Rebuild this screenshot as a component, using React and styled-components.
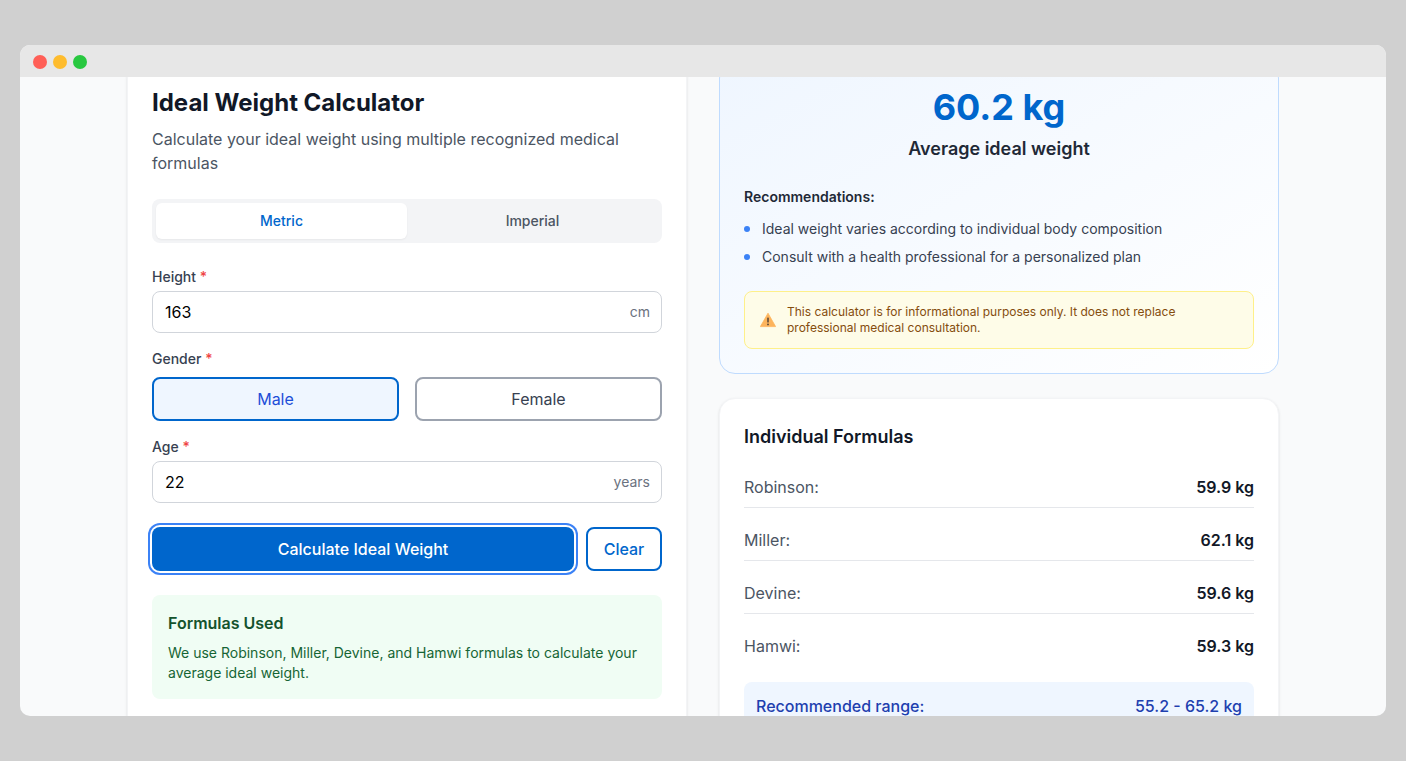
import React from "react";
import styled, { createGlobalStyle } from "styled-components";

const Global = createGlobalStyle`
  * { box-sizing: border-box; }
  html, body { margin: 0; height: 100%; }
  body {
    background: #d0d0d0;
    font-family: Inter, "Liberation Sans", sans-serif;
    overflow: hidden;
  }
`;

const Stage = styled.div`
  padding: 45px 20px;
`;
const Window = styled.div`
  height: 671px;
  border-radius: 10px;
  overflow: hidden;
  display: flex;
  flex-direction: column;
  background: #f9fafb;
`;
const TitleBar = styled.div`
  flex: none;
  height: 32px;
  background: #e7e7e7;
  display: flex;
  align-items: center;
  gap: 6px;
  padding: 2px 13px 0;
`;
const Dot = styled.span`
  width: 14px;
  height: 14px;
  border-radius: 50%;
  background: ${(p) => p.$color};
`;
const Viewport = styled.div`
  flex: 1;
  overflow: hidden;
`;
const Page = styled.div`
  width: 1152px;
  margin: -15px 0 0 107px;
  display: grid;
  grid-template-columns: 560px 560px;
  gap: 32px;
  align-items: start;
`;
const Column = styled.div`
  display: flex;
  flex-direction: column;
  gap: 24px;
`;
const Card = styled.section`
  background: #fff;
  border: 1px solid #f3f4f6;
  border-radius: 16px;
  padding: 24px;
  box-shadow: 0 1px 3px rgba(0, 0, 0, 0.1), 0 1px 2px -1px rgba(0, 0, 0, 0.1);
`;
const FormCard = styled(Card)`
  padding-bottom: 64px;
`;
const ResultCard = styled(Card)`
  background: linear-gradient(to bottom right, #eff6ff, #ffffff);
  border-color: #bfdbfe;
  box-shadow: none;
`;
const Title = styled.h1`
  margin: 0 0 8px;
  font-size: 24px;
  line-height: 32px;
  font-weight: 700;
  color: #111827;
`;
const Subtitle = styled.p`
  margin: 0 0 24px;
  font-size: 16px;
  line-height: 24px;
  color: #4b5563;
`;
const Tabs = styled.div`
  display: flex;
  padding: 4px;
  background: #f3f4f6;
  border-radius: 8px;
  margin-bottom: 24px;
`;
const Tab = styled.button`
  flex: 1;
  height: 36px;
  border: 0;
  border-radius: 6px;
  font: 500 14px/20px Inter, sans-serif;
  color: ${(p) => (p.$active ? "#0066cc" : "#4b5563")};
  background: ${(p) => (p.$active ? "#fff" : "transparent")};
  box-shadow: ${(p) => (p.$active ? "0 1px 2px rgba(0,0,0,0.05)" : "none")};
`;
const Field = styled.div`
  margin-bottom: 16px;
`;
const Label = styled.label`
  display: block;
  font-size: 14px;
  line-height: 20px;
  font-weight: 500;
  color: #374151;
  margin-bottom: ${(p) => p.$gap || 4}px;
`;
const Required = styled.span`
  color: #ef4444;
`;
const InputBox = styled.div`
  height: 42px;
  display: flex;
  align-items: center;
  padding: 0 11px 0 12px;
  border: 1px solid #d1d5db;
  border-radius: 8px;
  background: #fff;
`;
const Input = styled.input`
  flex: 1;
  min-width: 0;
  border: 0;
  outline: 0;
  padding: 0;
  background: transparent;
  font: 400 16px/24px Inter, sans-serif;
  color: #000;
`;
const Unit = styled.span`
  font-size: 14px;
  line-height: 20px;
  color: #6b7280;
`;
const GenderRow = styled.div`
  display: grid;
  grid-template-columns: 1fr 1fr;
  gap: 16px;
`;
const GenderButton = styled.button`
  height: 44px;
  border-radius: 8px;
  border: 2px solid ${(p) => (p.$active ? "#0066cc" : "#9ca3af")};
  background: ${(p) => (p.$active ? "#eff6ff" : "#fff")};
  color: ${(p) => (p.$active ? "#1d4ed8" : "#374151")};
  font: 400 16px/24px Inter, sans-serif;
`;
const Actions = styled.div`
  display: flex;
  gap: 12px;
  margin-top: 24px;
`;
const PrimaryButton = styled.button`
  flex: 1;
  height: 44px;
  border: 0;
  border-radius: 8px;
  background: #0066cc;
  color: #fff;
  font: 500 16px/24px Inter, sans-serif;
  box-shadow: 0 0 0 2px #fff, 0 0 0 4px #3b82f6;
`;
const ClearButton = styled.button`
  width: 76px;
  height: 44px;
  border: 2px solid #0066cc;
  border-radius: 8px;
  background: #fff;
  color: #0066cc;
  font: 500 16px/24px Inter, sans-serif;
`;
const InfoBox = styled.div`
  margin-top: 24px;
  padding: 16px;
  border-radius: 8px;
  background: #f0fdf4;
`;
const InfoTitle = styled.h3`
  margin: 0 0 8px;
  font-size: 16px;
  line-height: 24px;
  font-weight: 600;
  color: #14532d;
`;
const InfoText = styled.p`
  margin: 0;
  font-size: 14px;
  line-height: 20px;
  color: #166534;
`;
const BigValue = styled.div`
  text-align: center;
  font-size: 36px;
  line-height: 40px;
  font-weight: 700;
  color: #0066cc;
  margin-bottom: 8px;
`;
const BigLabel = styled.div`
  text-align: center;
  font-size: 18px;
  line-height: 28px;
  font-weight: 600;
  color: #1f2937;
  margin-bottom: 24px;
`;
const RecTitle = styled.h4`
  margin: 0 0 12px;
  font-size: 14px;
  line-height: 20px;
  font-weight: 600;
  color: #1f2937;
`;
const RecList = styled.ul`
  list-style: none;
  margin: 0 0 24px;
  padding: 0;
  display: flex;
  flex-direction: column;
  gap: 8px;
`;
const RecItem = styled.li`
  display: flex;
  align-items: center;
  gap: 12px;
  font-size: 14px;
  line-height: 20px;
  color: #374151;
`;
const Bullet = styled.span`
  flex: none;
  width: 6px;
  height: 6px;
  border-radius: 50%;
  background: #3b82f6;
`;
const Warning = styled.div`
  display: flex;
  align-items: center;
  gap: 11px;
  padding: 12px 15px;
  background: #fefce8;
  border: 1px solid #fef08a;
  border-radius: 8px;
  font-size: 12px;
  line-height: 16px;
  color: #854d0e;
`;
const WarnIcon = styled.svg`
  flex: none;
  width: 16px;
  height: 16px;
`;
const SectionTitle = styled.h3`
  margin: 0 0 16px;
  font-size: 18px;
  line-height: 28px;
  font-weight: 600;
  color: #111827;
`;
const Rows = styled.div`
  display: flex;
  flex-direction: column;
  gap: 12px;
`;
const Row = styled.div`
  display: flex;
  justify-content: space-between;
  padding: 8px 0;
  border-bottom: ${(p) => (p.$last ? "0" : "1px solid #e5e7eb")};
  font-size: 16px;
  line-height: 24px;
`;
const RowName = styled.span`
  color: #4b5563;
`;
const RowValue = styled.span`
  font-weight: 600;
  color: #111827;
`;
const RangeBox = styled.div`
  margin-top: 16px;
  padding: 12px;
  display: flex;
  justify-content: space-between;
  border-radius: 8px;
  background: #eff6ff;
  color: #1e40af;
  font-size: 16px;
  line-height: 24px;
  font-weight: 500;
`;

const formulas = [
  ["Robinson:", "59.9 kg"],
  ["Miller:", "62.1 kg"],
  ["Devine:", "59.6 kg"],
  ["Hamwi:", "59.3 kg"],
];

export default function App() {
  return (
    <>
      <Global />
      <Stage>
        <Window>
          <TitleBar>
            <Dot $color="#ff5f57" />
            <Dot $color="#febc2e" />
            <Dot $color="#28c840" />
          </TitleBar>
          <Viewport>
            <Page>
              <FormCard>
                <Title>Ideal Weight Calculator</Title>
                <Subtitle>Calculate your ideal weight using multiple recognized medical formulas</Subtitle>
                <Tabs>
                  <Tab $active>Metric</Tab>
                  <Tab>Imperial</Tab>
                </Tabs>
                <Field>
                  <Label>Height <Required>*</Required></Label>
                  <InputBox>
                    <Input value="163" readOnly />
                    <Unit>cm</Unit>
                  </InputBox>
                </Field>
                <Field>
                  <Label $gap={8}>Gender <Required>*</Required></Label>
                  <GenderRow>
                    <GenderButton $active>Male</GenderButton>
                    <GenderButton>Female</GenderButton>
                  </GenderRow>
                </Field>
                <Field>
                  <Label>Age <Required>*</Required></Label>
                  <InputBox>
                    <Input value="22" readOnly />
                    <Unit>years</Unit>
                  </InputBox>
                </Field>
                <Actions>
                  <PrimaryButton>Calculate Ideal Weight</PrimaryButton>
                  <ClearButton>Clear</ClearButton>
                </Actions>
                <InfoBox>
                  <InfoTitle>Formulas Used</InfoTitle>
                  <InfoText>We use Robinson, Miller, Devine, and Hamwi formulas to calculate your average ideal weight.</InfoText>
                </InfoBox>
              </FormCard>
              <Column>
                <ResultCard>
                  <BigValue>60.2 kg</BigValue>
                  <BigLabel>Average ideal weight</BigLabel>
                  <RecTitle>Recommendations:</RecTitle>
                  <RecList>
                    <RecItem><Bullet />Ideal weight varies according to individual body composition</RecItem>
                    <RecItem><Bullet />Consult with a health professional for a personalized plan</RecItem>
                  </RecList>
                  <Warning>
                    <WarnIcon viewBox="0 0 16 16">
                      <path d="M8 1.2 L15.6 14.6 H0.4 Z" fill="#fdb45c" stroke="#fdb45c" strokeWidth="0.8" strokeLinejoin="round" />
                      <rect x="7.2" y="5.4" width="1.6" height="5.2" rx="0.6" fill="#5c4a3a" />
                      <circle cx="8" cy="12.4" r="0.95" fill="#5c4a3a" />
                    </WarnIcon>
                    <span>This calculator is for informational purposes only. It does not replace professional medical consultation.</span>
                  </Warning>
                </ResultCard>
                <Card>
                  <SectionTitle>Individual Formulas</SectionTitle>
                  <Rows>
                    {formulas.map(([n, v], i) => (
                      <Row key={n} $last={i === formulas.length - 1}>
                        <RowName>{n}</RowName>
                        <RowValue>{v}</RowValue>
                      </Row>
                    ))}
                  </Rows>
                  <RangeBox>
                    <span>Recommended range:</span>
                    <span>55.2 - 65.2 kg</span>
                  </RangeBox>
                </Card>
              </Column>
            </Page>
          </Viewport>
        </Window>
      </Stage>
    </>
  );
}
